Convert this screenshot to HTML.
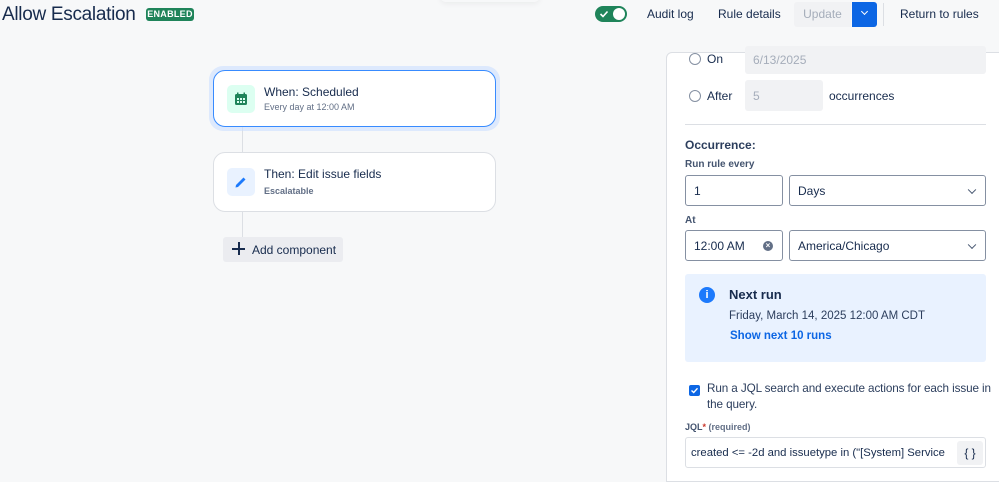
<!DOCTYPE html>
<html><head><style>
*{box-sizing:border-box;margin:0;padding:0}
body{width:999px;height:469px;overflow:hidden;background:#f7f8f9;font-family:"Liberation Sans",sans-serif;color:#172b4d;position:relative}
.a{position:absolute}
.inp{position:absolute;border:1px solid #8590a2;border-radius:3px;background:#fff;font-size:12px;padding-left:8px;display:flex;align-items:center}
.dis{position:absolute;background:#f1f2f4;border-radius:3px;color:#a5adba;font-size:12px;padding-left:8px;display:flex;align-items:center}
.radio{position:absolute;width:12px;height:12px;border:1px solid #8590a2;border-radius:50%;background:#fff}
.chev{position:absolute;right:10px;top:50%;width:6px;height:6px;border-right:1.6px solid #44546f;border-bottom:1.6px solid #44546f;transform:translateY(-70%) rotate(45deg)}
</style></head><body>
<div class="a" style="left:440px;top:-10px;width:100px;height:12px;box-shadow:0 2px 6px rgba(0,0,0,.05);border-radius:6px;background:#f7f8f9"></div>
<div class="a" style="left:2px;top:4px;font-size:19px;letter-spacing:-.3px;color:#172b4d">Allow Escalation</div>
<div class="a" style="left:146px;top:8px;width:48px;height:13px;background:#1f845a;border-radius:3px;color:#fff;font-size:9px;font-weight:bold;text-align:center;line-height:13px;letter-spacing:.3px">ENABLED</div>

<div class="a" style="left:595px;top:6px;width:32px;height:16px;background:#1f845a;border-radius:8px"></div>
<div class="a" style="left:613px;top:8px;width:12px;height:12px;background:#fff;border-radius:50%"></div>
<svg class="a" style="left:599px;top:9px" width="10" height="10" viewBox="0 0 10 10"><path d="M1.5 5 L4 7.5 L8.5 2.5" stroke="#fff" stroke-width="1.6" fill="none"/></svg>
<div class="a" style="left:647px;top:7px;font-size:12px">Audit log</div>
<div class="a" style="left:718px;top:7px;font-size:12px">Rule details</div>
<div class="a" style="left:794px;top:2px;width:57px;height:25px;background:#f1f2f4;border-radius:3px 0 0 3px;color:#a5adba;font-size:12px;text-align:center;line-height:25px">Update</div>
<div class="a" style="left:852px;top:2px;width:25px;height:25px;background:#0c66e4;border-radius:0 3px 3px 0"></div>
<div class="a" style="left:862px;top:9px;width:5px;height:5px;border-right:1.5px solid #fff;border-bottom:1.5px solid #fff;transform:rotate(45deg)"></div>
<div class="a" style="left:883px;top:3px;width:1px;height:23px;background:#dcdfe4"></div>
<div class="a" style="left:900px;top:7px;font-size:12px">Return to rules</div>

<div class="a" style="left:242px;top:125px;width:1px;height:112px;background:#dcdfe4"></div>
<div class="a" style="left:209px;top:66px;width:291px;height:65px;border-radius:14px;background:#cce0ff;opacity:.6"></div>
<div class="a" style="left:213px;top:70px;width:283px;height:57px;border:1.5px solid #388bff;border-radius:12px;background:#fff"></div>
<div class="a" style="left:227px;top:85px;width:28px;height:28px;border-radius:5px;background:#dcfff1"></div>
<svg class="a" style="left:233px;top:91px" width="16" height="16" viewBox="0 0 16 16"><rect x="2" y="3" width="12" height="11" rx="1.5" fill="#1f845a"/><rect x="4" y="1.5" width="1.5" height="3" fill="#1f845a"/><rect x="10.5" y="1.5" width="1.5" height="3" fill="#1f845a"/><g fill="#dcfff1"><rect x="4" y="7" width="2" height="2"/><rect x="7" y="7" width="2" height="2"/><rect x="10" y="7" width="2" height="2"/><rect x="4" y="10" width="2" height="2"/><rect x="7" y="10" width="2" height="2"/><rect x="10" y="10" width="2" height="2"/></g></svg>
<div class="a" style="left:264px;top:85px;font-size:12px">When: Scheduled</div>
<div class="a" style="left:264px;top:102px;font-size:9px;color:#626f86">Every day at 12:00 AM</div>

<div class="a" style="left:213px;top:152px;width:283px;height:60px;border:1px solid #dcdfe4;border-radius:12px;background:#fff"></div>
<div class="a" style="left:227px;top:168px;width:28px;height:28px;border-radius:5px;background:#e9f2ff"></div>
<svg class="a" style="left:233px;top:174px" width="16" height="16" viewBox="0 0 16 16"><path d="M3 11 L10.5 3.5 L12.5 5.5 L5 13 L2.5 13.5 Z" fill="#1d7afc"/></svg>
<div class="a" style="left:264px;top:167px;font-size:12px">Then: Edit issue fields</div>
<div class="a" style="left:264px;top:186px;font-size:9px;font-weight:bold;color:#626f86">Escalatable</div>

<div class="a" style="left:223px;top:237px;width:120px;height:25px;background:#ebecf0;border-radius:3px"></div>
<div class="a" style="left:232px;top:248px;width:13px;height:1.6px;background:#172b4d"></div>
<div class="a" style="left:238px;top:242px;width:1.6px;height:13px;background:#172b4d"></div>
<div class="a" style="left:252px;top:243px;font-size:12px">Add component</div>

<div class="a" style="left:666px;top:52px;width:340px;height:430px;background:#fff;border:1px solid #dcdfe4;border-radius:6px 0 0 0"></div>
<div class="radio" style="left:689px;top:53px"></div>
<div class="a" style="left:707px;top:52px;font-size:12px">On</div>
<div class="dis" style="left:745px;top:46px;width:241px;height:28px">6/13/2025</div>
<div class="radio" style="left:689px;top:90px"></div>
<div class="a" style="left:707px;top:89px;font-size:12px">After</div>
<div class="dis" style="left:745px;top:80px;width:78px;height:31px">5</div>
<div class="a" style="left:829px;top:89px;font-size:12px">occurrences</div>
<div class="a" style="left:685px;top:124px;width:301px;height:1px;background:#dcdfe4"></div>
<div class="a" style="left:685px;top:138px;font-size:12px;font-weight:bold;color:#2c3e5d">Occurrence:</div>
<div class="a" style="left:685px;top:159px;font-size:10px;font-weight:bold;color:#44546f">Run rule every</div>
<div class="inp" style="left:685px;top:175px;width:98px;height:31px">1</div>
<div class="inp" style="left:789px;top:175px;width:197px;height:31px">Days<span class="chev"></span></div>
<div class="a" style="left:685px;top:215px;font-size:10px;font-weight:bold;color:#44546f">At</div>
<div class="inp" style="left:685px;top:230px;width:98px;height:31px">12:00 AM<span style="position:absolute;right:9px;top:10px;width:10px;height:10px;border-radius:50%;background:#626f86;color:#fff;font-size:8px;line-height:10px;text-align:center;font-weight:bold">×</span></div>
<div class="inp" style="left:789px;top:230px;width:197px;height:31px">America/Chicago<span class="chev"></span></div>

<div class="a" style="left:685px;top:274px;width:301px;height:88px;background:#e9f2ff;border-radius:3px"></div>
<div class="a" style="left:699px;top:287px;width:16px;height:16px;border-radius:50%;background:#1d7afc;color:#fff;font-size:11px;font-weight:bold;text-align:center;line-height:16px">i</div>
<div class="a" style="left:729px;top:287px;font-size:13px;font-weight:bold">Next run</div>
<div class="a" style="left:729px;top:310px;font-size:11.5px;color:#2c3e5d">Friday, March 14, 2025 12:00 AM CDT</div>
<div class="a" style="left:730px;top:330px;font-size:11.5px;font-weight:bold;color:#0c66e4">Show next 10 runs</div>

<div class="a" style="left:689px;top:385px;width:11px;height:11px;background:#0c66e4;border-radius:2px"></div>
<svg class="a" style="left:690px;top:386px" width="9" height="9" viewBox="0 0 9 9"><path d="M1.5 4.5 L3.7 6.5 L7.5 2.3" stroke="#fff" stroke-width="1.4" fill="none"/></svg>
<div class="a" style="left:707px;top:381px;width:290px;font-size:11.7px;line-height:16px;color:#2c3e5d;letter-spacing:-.1px">Run a JQL search and execute actions for each issue in the query.</div>
<div class="a" style="left:685px;top:422px;font-size:9px;font-weight:bold;color:#44546f">JQL<span style="color:#c9372c">*</span> <span style="color:#626f86">(required)</span></div>
<div class="inp" style="left:685px;top:437px;width:301px;height:31px;border-color:#dcdfe4;color:#172b4d;white-space:nowrap;overflow:hidden;padding-left:5px;font-size:11.3px">created &lt;= -2d and issuetype in ("[System] Service<span style="position:absolute;right:2px;top:3px;width:26px;height:24px;background:#f1f2f4;border-radius:3px;text-align:center;line-height:24px;font-size:12px">{ }</span></div>
</body></html>
